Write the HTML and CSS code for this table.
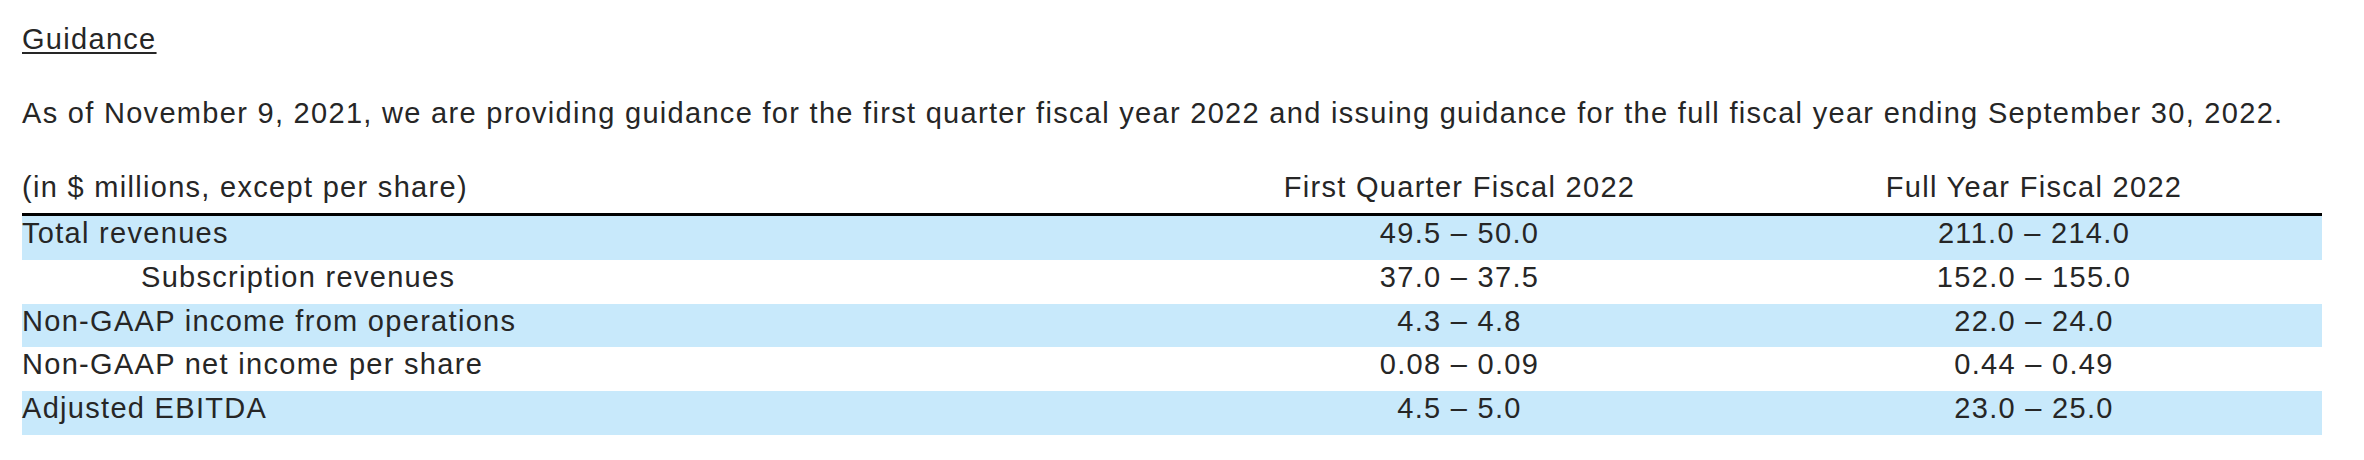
FILE: index.html
```html
<!DOCTYPE html>
<html lang="en">
<head>
<meta charset="utf-8">
<title>Guidance</title>
<link rel="stylesheet" href="styles.css">
</head>
<body>
<main class="page">
  <h2 class="title">Guidance</h2>
  <p class="intro">As of November 9, 2021, we are providing guidance for the first quarter fiscal year 2022 and issuing guidance for the full fiscal year ending September 30, 2022.</p>
  <div class="table">
    <div class="row head">
      <div class="cell label">(in $ millions, except per share)</div>
      <div class="cell num">First Quarter Fiscal 2022</div>
      <div class="cell num">Full Year Fiscal 2022</div>
    </div>
    <div class="row shaded first">
      <div class="cell label">Total revenues</div>
      <div class="cell num">49.5 – 50.0</div>
      <div class="cell num">211.0 – 214.0</div>
    </div>
    <div class="row">
      <div class="cell label indent">Subscription revenues</div>
      <div class="cell num">37.0 – 37.5</div>
      <div class="cell num">152.0 – 155.0</div>
    </div>
    <div class="row shaded">
      <div class="cell label">Non-GAAP income from operations</div>
      <div class="cell num">4.3 – 4.8</div>
      <div class="cell num">22.0 – 24.0</div>
    </div>
    <div class="row">
      <div class="cell label">Non-GAAP net income per share</div>
      <div class="cell num">0.08 – 0.09</div>
      <div class="cell num">0.44 – 0.49</div>
    </div>
    <div class="row shaded">
      <div class="cell label">Adjusted EBITDA</div>
      <div class="cell num">4.5 – 5.0</div>
      <div class="cell num">23.0 – 25.0</div>
    </div>
  </div>
</main>
</body>
</html>
```
FILE: styles.css
```css
* { box-sizing: border-box; }

html, body {
  margin: 0;
  padding: 0;
  background: #ffffff;
}

.page {
  padding: 22px 42px 0 22px;
  font-family: "Liberation Sans", Arial, sans-serif;
  font-size: 29px;
  letter-spacing: 1.3px;
  line-height: 34px;
  color: #262626;
}

.title {
  margin: 0;
  font-size: 29px;
  font-weight: normal;
  text-decoration: underline;
  text-decoration-thickness: 2px;
  text-underline-offset: 3px;
}

.intro {
  margin: 40px 0 0 0;
  white-space: nowrap;
}

.table {
  margin-top: 40px;
  width: 2300px;
}

.row {
  display: grid;
  grid-template-columns: 1151px 573px 576px;
  height: 43.75px;
}

.row.head {
  height: 46px;
  border-bottom: 3px solid #000000;
}

.row.shaded {
  background: #c8e9fb;
}

.cell {
  white-space: nowrap;
}

.num {
  text-align: center;
}

.indent {
  padding-left: 119px;
}
```
